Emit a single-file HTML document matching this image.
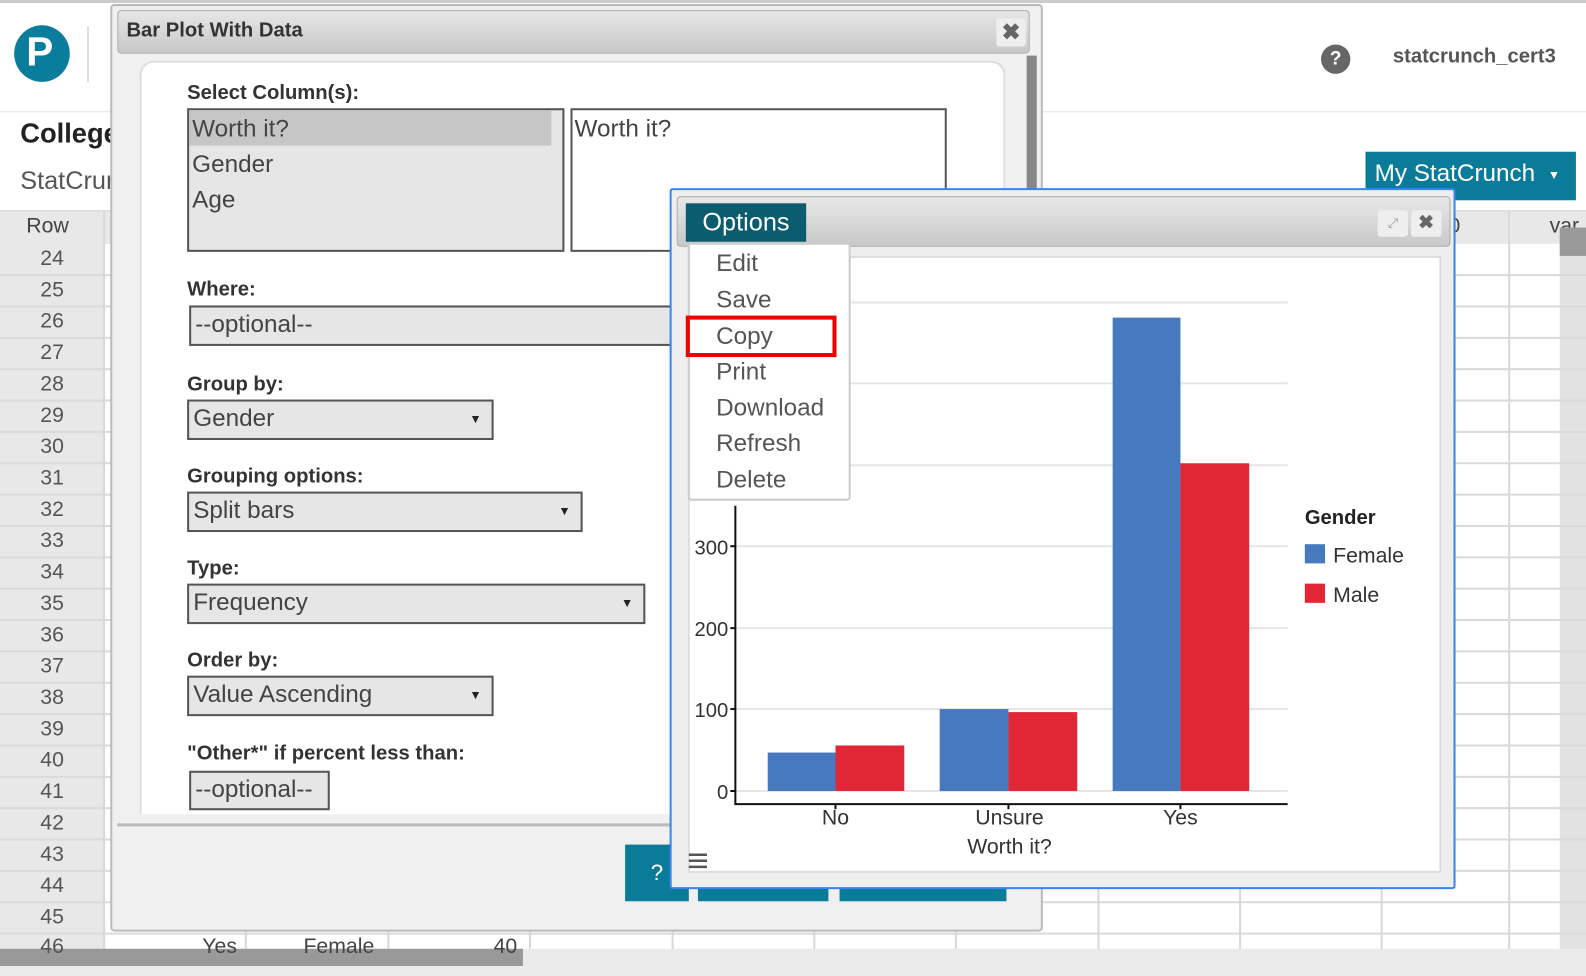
<!DOCTYPE html>
<html><head><meta charset="utf-8"><style>
*{box-sizing:border-box;margin:0;padding:0}
body{width:1586px;height:965px;overflow:hidden;background:#fff;font-family:"Liberation Sans",sans-serif;position:relative;color:#333}
#w{position:absolute;left:0;top:0;width:1586px;height:965px;transform:scale(1.0115);transform-origin:0 0}
.a{position:absolute}
.lbl{position:absolute;font-weight:bold;font-size:20px;color:#333}
.inp{position:absolute;background:#e6e6e6;border:2px solid #555;font-size:24px;color:#444;padding-left:4px;line-height:34px}
.sel:after{content:"▼";position:absolute;right:10px;top:0;font-size:12px;color:#222}
.rn{position:absolute;left:0;width:103px;text-align:center;font-size:21px;color:#555}
.mi{position:absolute;left:28px;font-size:24px;color:#555}
</style></head><body><div id="w">
<div class="a" style="left:0;top:0;width:1586px;height:3px;background:#ccc"></div>
<div class="a" style="left:14px;top:25px;width:55px;height:56px;border-radius:50%;background:#0a7c9c"></div>
<div class="a" style="left:26px;top:30px;width:30px;font-size:40px;font-weight:bold;color:#fff">P</div>
<div class="a" style="left:86px;top:26px;width:2px;height:55px;background:#ddd"></div>
<div class="a" style="left:0;top:110px;width:1586px;height:1px;background:#e2e2e2"></div>
<div class="a" style="left:20px;top:117px;font-size:27px;font-weight:bold;color:#222">College</div>
<div class="a" style="left:20px;top:165px;font-size:25px;color:#555">StatCrunch</div>
<div class="a" style="left:1306px;top:44px;width:29px;height:29px;border-radius:50%;background:#666;color:#fff;font-weight:bold;font-size:19px;text-align:center;line-height:29px">?</div>
<div class="a" style="left:1377px;top:45px;font-size:20px;font-weight:bold;color:#555">statcrunch_cert3</div>
<div class="a" style="left:1350px;top:150px;width:208px;height:48px;background:#0a7c99;color:#fff;font-size:24px;line-height:44px;padding-left:9px">My StatCrunch <span style="font-size:12px;vertical-align:middle;margin-left:6px">▼</span></div>
<div class="a" style="left:0;top:208px;width:1586px;height:1px;background:#ccc"></div>
<div class="a" style="left:0;top:209px;width:1586px;height:32px;background:#e8e8e8"></div>
<div class="a" style="left:0;top:241px;width:103px;height:700px;background:#e8e8e8"></div>
<div class="a" style="left:26px;top:212px;font-size:21px;color:#444">Row</div>
<div class="a" style="left:1432px;top:212px;font-size:21px;color:#444">0</div>
<div class="a" style="left:1532px;top:212px;font-size:21px;color:#444">var</div>
<div class="a" style="left:1542px;top:225px;width:44px;height:725px;background:#e2e2e2"></div>
<div class="a" style="left:1542px;top:225px;width:44px;height:28px;background:#999"></div>
<svg class="a" style="left:0;top:0" width="1586" height="965">
<g stroke="#d8d8d8" stroke-width="2">
<line x1="103" y1="209" x2="103" y2="955"/><line x1="243" y1="209" x2="243" y2="955"/><line x1="384" y1="209" x2="384" y2="955"/><line x1="524" y1="209" x2="524" y2="955"/><line x1="665" y1="209" x2="665" y2="955"/><line x1="805" y1="209" x2="805" y2="955"/><line x1="945" y1="209" x2="945" y2="955"/><line x1="1086" y1="209" x2="1086" y2="955"/><line x1="1226" y1="209" x2="1226" y2="955"/><line x1="1366" y1="209" x2="1366" y2="955"/><line x1="1492" y1="209" x2="1492" y2="955"/>
</g>
<g stroke="#dadada" stroke-width="2" id="hl"></g>
</svg>
<div id="rows"></div>
<div class="a" style="left:0;top:938px;width:1586px;height:27px;background:#ebebeb"></div>
<div class="a" style="left:0;top:938px;width:517px;height:17px;background:#999"></div>
<div class="a" style="left:200px;top:924px;font-size:21px;color:#444">Yes</div>
<div class="a" style="left:300px;top:924px;font-size:21px;color:#444">Female</div>
<div class="a" style="left:488px;top:924px;font-size:21px;color:#444">40</div>
<div class="rn" style="top:924px">46</div>
<div class="a" style="left:109px;top:4px;width:922px;height:917px;background:#f0f0f0;border:2px solid #bbb;border-radius:4px"></div>
<div class="a" style="left:116px;top:10px;width:902px;height:43px;background:linear-gradient(#e6e6e6,#c8c8c8);border:1px solid #aaa;border-radius:4px"></div>
<div class="a" style="left:125px;top:19px;font-size:20px;font-weight:bold;color:#333">Bar Plot With Data</div>
<div class="a" style="left:985px;top:18px;width:29px;height:28px;background:#eee;border-radius:3px;color:#666;font-size:22px;text-align:center;line-height:27px;font-weight:bold">✖</div>
<div class="a" style="left:138px;top:60px;width:856px;height:745px;background:#fff;border:2px solid #ddd;border-bottom:none;border-radius:14px 14px 0 0"></div>
<div class="a" style="left:1015px;top:55px;width:10px;height:135px;background:#888"></div>
<div class="a" style="left:116px;top:814px;width:910px;height:3px;background:#bbb"></div>
<div class="a" style="left:618px;top:835px;width:63px;height:56px;background:#0a7c99;color:#fff;font-size:22px;text-align:center;line-height:56px">?</div>
<div class="a" style="left:690px;top:835px;width:129px;height:56px;background:#0a7c99"></div>
<div class="a" style="left:830px;top:835px;width:165px;height:56px;background:#0a7c99"></div>
<div class="lbl" style="left:185px;top:81px">Select Column(s):</div>
<div class="a" style="left:185px;top:107px;width:373px;height:142px;background:#e6e6e6;border:2px solid #555"></div>
<div class="a" style="left:187px;top:109px;width:358px;height:35px;background:#c6c6c6"></div>
<div class="a" style="left:190px;top:110px;font-size:24px;color:#444;line-height:35px">Worth it?<br>Gender<br>Age</div>
<div class="a" style="left:564px;top:107px;width:372px;height:142px;background:#fff;border:2px solid #555"></div>
<div class="a" style="left:568px;top:110px;font-size:24px;color:#444;line-height:35px">Worth it?</div>
<div class="lbl" style="left:185px;top:275px">Where:</div>
<div class="inp" style="left:187px;top:302px;width:500px;height:40px">--optional--</div>
<div class="lbl" style="left:185px;top:369px">Group by:</div>
<div class="inp sel" style="left:185px;top:395px;width:303px;height:40px">Gender</div>
<div class="lbl" style="left:185px;top:460px">Grouping options:</div>
<div class="inp sel" style="left:185px;top:486px;width:391px;height:40px">Split bars</div>
<div class="lbl" style="left:185px;top:551px">Type:</div>
<div class="inp sel" style="left:185px;top:577px;width:453px;height:40px">Frequency</div>
<div class="lbl" style="left:185px;top:642px">Order by:</div>
<div class="inp sel" style="left:185px;top:668px;width:303px;height:40px">Value Ascending</div>
<div class="lbl" style="left:185px;top:734px">"Other*" if percent less than:</div>
<div class="inp" style="left:187px;top:762px;width:139px;height:39px">--optional--</div>
<div class="a" style="left:662px;top:186px;width:777px;height:693px;background:#eee;border:2px solid #3b82f6;border-radius:3px"></div>
<div class="a" style="left:669px;top:194px;width:765px;height:50px;background:linear-gradient(#e8e8e8,#c8c8c8);border:1px solid #aaa;border-radius:4px"></div>
<div class="a" style="left:678px;top:201px;width:119px;height:38px;background:#0b5c6e;color:#fff;font-size:25px;line-height:38px;text-align:center">Options</div>
<div class="a" style="left:1362px;top:208px;width:30px;height:26px;background:#eee;border-radius:3px;color:#999;font-size:13px;text-align:center;line-height:26px">⤢</div>
<div class="a" style="left:1395px;top:208px;width:30px;height:26px;background:#eee;border-radius:3px;color:#666;font-size:19px;text-align:center;line-height:26px;font-weight:bold">✖</div>
<div class="a" style="left:680px;top:253px;width:745px;height:610px;background:#fff;border:2px solid #ddd"></div>
<svg class="a" style="left:0;top:0" width="1586" height="965">
<g stroke="#e6e6e6" stroke-width="2">
<line x1="727" y1="299" x2="1273" y2="299"/><line x1="727" y1="379" x2="1273" y2="379"/><line x1="727" y1="460" x2="1273" y2="460"/><line x1="727" y1="540" x2="1273" y2="540"/><line x1="727" y1="621" x2="1273" y2="621"/><line x1="727" y1="701" x2="1273" y2="701"/><line x1="727" y1="782" x2="1273" y2="782"/>
</g>
<rect x="759" y="744" width="67" height="38" fill="#4779be"/><rect x="826" y="737" width="68" height="45" fill="#e12736"/>
<rect x="929" y="701" width="68" height="81" fill="#4779be"/><rect x="997" y="704" width="68" height="78" fill="#e12736"/>
<rect x="1100" y="314" width="67" height="468" fill="#4779be"/><rect x="1167" y="458" width="68" height="324" fill="#e12736"/>
<g stroke="#111" stroke-width="2"><line x1="727" y1="500" x2="727" y2="795"/><line x1="726" y1="795" x2="1273" y2="795"/>
<line x1="722" y1="540" x2="727" y2="540"/><line x1="722" y1="621" x2="727" y2="621"/><line x1="722" y1="701" x2="727" y2="701"/><line x1="722" y1="782" x2="727" y2="782"/>
<line x1="826" y1="795" x2="826" y2="800"/><line x1="997" y1="795" x2="997" y2="800"/><line x1="1167" y1="795" x2="1167" y2="800"/></g>
<g font-family="Liberation Sans" font-size="20" fill="#333" text-anchor="end"><text x="720" y="548">300</text><text x="720" y="629">200</text><text x="720" y="709">100</text><text x="720" y="790">0</text></g>
<g font-family="Liberation Sans" font-size="21" fill="#333" text-anchor="middle"><text x="826" y="815">No</text><text x="998" y="815">Unsure</text><text x="1167" y="815">Yes</text><text x="998" y="844">Worth it?</text></g>
<text x="1290" y="518" font-family="Liberation Sans" font-size="20" font-weight="bold" fill="#222">Gender</text>
<rect x="1290" y="538" width="20" height="19" fill="#4779be"/><rect x="1290" y="577" width="20" height="19" fill="#e12736"/>
<g font-family="Liberation Sans" font-size="21" fill="#333"><text x="1318" y="556">Female</text><text x="1318" y="595">Male</text></g>
<g stroke="#555" stroke-width="2.5"><line x1="681" y1="845" x2="699" y2="845"/><line x1="681" y1="851" x2="699" y2="851"/><line x1="681" y1="857" x2="699" y2="857"/></g>
</svg>
<div class="a" style="left:680px;top:240px;width:161px;height:255px;background:#fff;border:2px solid #ccc;border-radius:3px"></div>
<div class="mi" style="left:708px;top:247px">Edit</div>
<div class="mi" style="left:708px;top:283px">Save</div>
<div class="mi" style="left:708px;top:319px">Copy</div>
<div class="mi" style="left:708px;top:354px">Print</div>
<div class="mi" style="left:708px;top:390px">Download</div>
<div class="mi" style="left:708px;top:425px">Refresh</div>
<div class="mi" style="left:708px;top:461px">Delete</div>
<div class="a" style="left:678px;top:312px;width:149px;height:41px;border:4px solid #e00"></div>
</div>
<script>
var h='',r='';
for(var i=24;i<=45;i++){var y=241+(i-24)*31;r+='<div class="rn" style="top:'+(y+3)+'px">'+i+'</div>';h+='<line x1="0" y1="'+(y+31)+'" x2="1586" y2="'+(y+31)+'"/>';}
document.getElementById('rows').innerHTML=r;document.getElementById('hl').innerHTML=h;
</script>
</body></html>
